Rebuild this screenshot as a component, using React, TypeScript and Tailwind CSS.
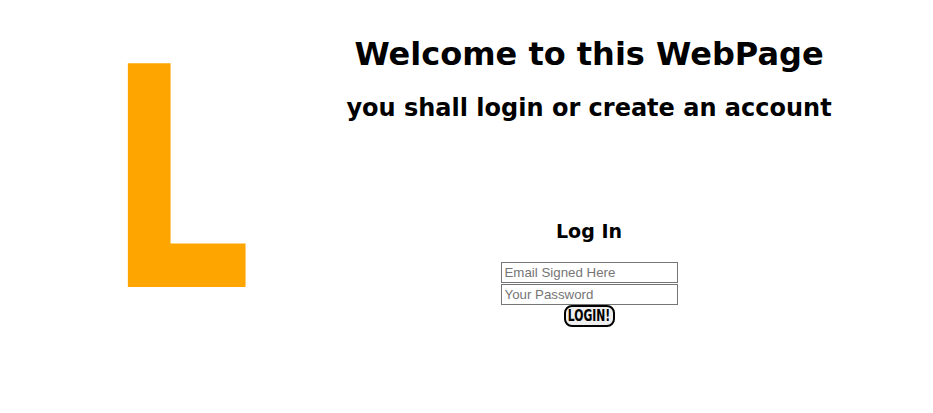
export default function App() {
  return (
    <div className="flex min-h-[413px] w-[933px] bg-white text-black" style={{ fontFamily: '"DejaVu Sans", Verdana, sans-serif' }}>
      <div className="w-[245px] shrink-0 pt-[27px] pl-[107px]">
        <div className="origin-left scale-x-[0.74] text-[307px] font-bold leading-none text-[#ffa500]">L</div>
      </div>
      <div className="flex flex-1 flex-col items-center">
        <h1 className="mt-[34px] text-[32px] font-bold leading-tight">Welcome to this WebPage</h1>
        <h2 className="mt-[19px] text-[24px] font-bold leading-tight">you shall login or create an account</h2>
        <h3 className="mt-[97px] text-[19px] font-bold leading-tight">Log In</h3>
        <form className="mt-[18px] flex flex-col items-center">
          <input
            type="email"
            placeholder="Email Signed Here"
            className="h-[21px] w-[177px] border border-[#767676] px-[3px] text-[13.3px] outline-none placeholder:text-[#757575]"
            style={{ fontFamily: '"Liberation Sans", Arial, sans-serif' }}
          />
          <input
            type="password"
            placeholder="Your Password"
            className="mt-[1px] h-[21px] w-[177px] border border-[#767676] px-[3px] text-[13.3px] outline-none placeholder:text-[#757575]"
            style={{ fontFamily: '"Liberation Sans", Arial, sans-serif' }}
          />
          <button
            type="submit"
            className="flex h-[22px] w-[51px] items-center justify-center rounded-[8px] border-2 border-black bg-[#efefef] text-[12px] font-bold leading-none"
            style={{ fontFamily: '"Liberation Sans Narrow", "DejaVu Sans Condensed", sans-serif' }}
          >
            <span className="inline-block scale-y-[1.28]">LOGIN!</span>
          </button>
        </form>
      </div>
    </div>
  );
}
